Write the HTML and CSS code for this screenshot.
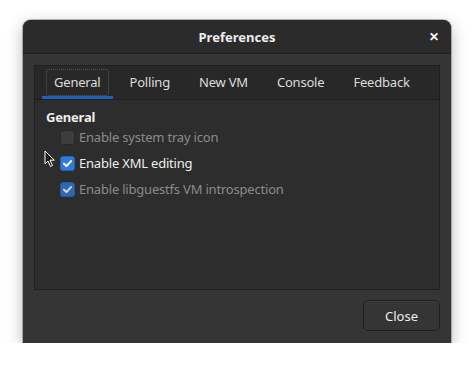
FILE: index.html
```html
<!DOCTYPE html>
<html lang="en">
<head>
    <meta charset="UTF-8">
    <title>Preferences</title>
    <link rel="stylesheet" href="styles.css">
</head>
<body>
    <div class="dialog">
        <div class="titlebar">
            <span class="title">Preferences</span>
            <span class="close-x">&#x2715;</span>
        </div>

        <div class="dialog-body">
            <div class="notebook">
                <div class="tabs">
                    <div class="tab active"><span>General</span></div>
                    <div class="tab"><span>Polling</span></div>
                    <div class="tab"><span>New VM</span></div>
                    <div class="tab"><span>Console</span></div>
                    <div class="tab"><span>Feedback</span></div>
                </div>
                <div class="page">
                    <div class="section-title">General</div>
                    <label class="check disabled">
                        <span class="box"></span>
                        <span>Enable system tray icon</span>
                    </label>
                    <label class="check">
                        <span class="box checked">
                            <svg viewBox="0 0 14 14"><path d="M3.2 7.2 L5.9 9.8 L10.8 4.4" /></svg>
                        </span>
                        <span>Enable XML editing</span>
                    </label>
                    <label class="check disabled">
                        <span class="box checked">
                            <svg viewBox="0 0 14 14"><path d="M3.2 7.2 L5.9 9.8 L10.8 4.4" /></svg>
                        </span>
                        <span>Enable libguestfs VM introspection</span>
                    </label>

                    <!-- mouse pointer over the page -->
                    <svg class="pointer" viewBox="0 0 12 18">
                        <path d="M1 1 L1 14 L4 11 L6.5 16.5 L8.5 15.5 L6 10.2 L10.3 10.2 Z" />
                    </svg>
                </div>
            </div>

            <div class="actions">
                <button class="btn">Close</button>
            </div>
        </div>
    </div>
</body>
</html>
```

FILE: styles.css
```css
* {
    margin: 0;
    padding: 0;
    box-sizing: border-box;
}

body {
    background: #ffffff;
    font-family: 'Noto Sans', 'Open Sans', sans-serif;
    font-size: 13px;
    letter-spacing: -0.2px;
    color: #eeeeec;
    padding: 20px 22px 0 23px;
}

.dialog {
    width: 428px;
    height: 323px;
    background: #353535;
    border-radius: 8px 8px 0 0;
    box-shadow: 0 5px 16px rgba(0, 0, 0, 0.3), 0 0 0 1px rgba(0, 0, 0, 0.25);
    display: flex;
    flex-direction: column;
    overflow: hidden;
}

.titlebar {
    height: 34px;
    background: #2b2b2b;
    border-bottom: 1px solid #1c1c1c;
    display: flex;
    align-items: center;
    justify-content: center;
    position: relative;
}

.title {
    font-weight: 700;
    font-size: 13px;
    letter-spacing: 0;
    color: #ededed;
}

.close-x {
    position: absolute;
    right: 12px;
    top: 8px;
    font-size: 12px;
    font-weight: 700;
    color: #ffffff;
}

.dialog-body {
    flex: 1;
    padding: 11px 11px 12px 11px;
    display: flex;
    flex-direction: column;
}

.notebook {
    height: 225px;
    border: 1px solid #1f1f1f;
    background: #2d2d2d;
    display: flex;
    flex-direction: column;
}

.tabs {
    height: 34px;
    background: #282828;
    border-bottom: 1px solid #1f1f1f;
    display: flex;
    padding-left: 7px;
}

.tab {
    padding: 0 4px;
    margin-right: 5px;
    display: flex;
    align-items: center;
    position: relative;
    white-space: nowrap;
    color: #dcdcdc;
}

.tab span {
    padding: 3px 7px 4px;
    border: 1px solid transparent;
}

.tab.active span {
    border: 1px dotted #5a5a5a;
    border-radius: 3px;
}

.tab.active::after {
    content: "";
    position: absolute;
    left: 0;
    right: 0;
    bottom: 0;
    height: 3px;
    background: #1c61b5;
}

.page {
    flex: 1;
    padding: 10px 11px;
    position: relative;
}

.section-title {
    font-weight: 700;
    color: #eeeeec;
    height: 14px;
    line-height: 14px;
}

.check {
    display: flex;
    align-items: center;
    gap: 4px;
    height: 26px;
    padding-left: 14px;
    color: #eeeeec;
}

.check.disabled {
    color: #8b8b8b;
}

.box {
    width: 15px;
    height: 15px;
    border-radius: 3px;
    background: #414141;
    border: 1px solid #262626;
    display: flex;
    align-items: center;
    justify-content: center;
}

.box.checked {
    background: #2e79d9;
    border-color: #2463b3;
}

.check.disabled .box {
    opacity: 0.8;
}

.box svg {
    width: 13px;
    height: 13px;
    fill: none;
    stroke: #ffffff;
    stroke-width: 2.2;
    stroke-linecap: round;
    stroke-linejoin: round;
}

.pointer {
    position: absolute;
    left: 9px;
    top: 50px;
    width: 12px;
    height: 18px;
    fill: #1c1c1c;
    stroke: #ffffff;
    stroke-width: 1;
}

.actions {
    flex: 1;
    display: flex;
    justify-content: flex-end;
    align-items: flex-end;
}

.btn {
    width: 77px;
    height: 31px;
    background: #353535;
    border: 1px solid #1f1f1f;
    border-radius: 5px;
    font-family: inherit;
    font-size: 13px;
    color: #eeeeec;
    box-shadow: inset 0 1px rgba(255, 255, 255, 0.04);
}
```
